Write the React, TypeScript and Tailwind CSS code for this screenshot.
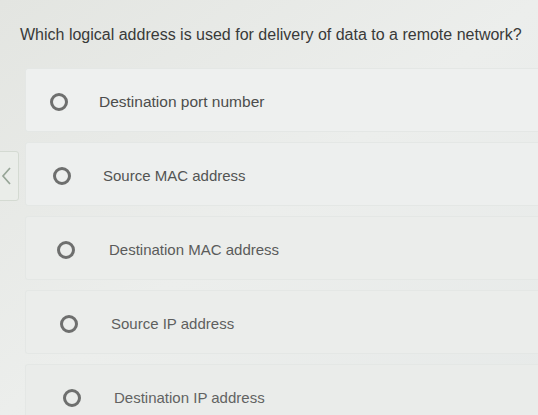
const options = [
  { label: "Destination port number", row: "pl-[24px] gap-[31px] bg-[#eef0ef]", text: "text-[15.5px] text-[#4c4d4c]" },
  { label: "Source MAC address", row: "pl-[27px] gap-[32px] bg-[#edefee]", text: "text-[15px] text-[#535453]" },
  { label: "Destination MAC address", row: "pl-[31px] gap-[34px] bg-[#ebedeb]", text: "text-[15px] text-[#5a5b5a]" },
  { label: "Source IP address", row: "pl-[34px] gap-[33px] bg-[#ebedeb]", text: "text-[15px] text-[#5e5f5e]" },
  { label: "Destination IP address", row: "pl-[37px] gap-[33px] bg-[#eaecea]", text: "text-[15px] text-[#626362]" },
];

function Radio() {
  return (
    <span className="block h-[18px] w-[18px] shrink-0 rounded-full border-[3px] border-[#6e6f6e]" />
  );
}

export default function App() {
  return (
    <div
      className="relative h-[415px] w-[538px] overflow-hidden bg-gradient-to-br from-[#e3e5e1] via-[#eceeec] to-[#e7eae9]"
      style={{ fontFamily: '"Liberation Sans", Arial, sans-serif' }}
    >
      <div className="pl-[20px] pt-[25px] text-[16px] leading-[20px] text-[#393a39]">
        Which logical address is used for delivery of data to a remote network?
      </div>

      {/* back arrow tab on the left edge */}
      <div className="absolute left-[-4px] top-[151px] flex h-[50px] w-[23px] items-center justify-center rounded-[3px] border border-[#d4dad2] bg-[#eaede9]">
        <svg width="11" height="20" viewBox="0 0 11 20" className="ml-[-2px]">
          <path d="M9 2 L2 10 L9 18" fill="none" stroke="#97a597" strokeWidth="1.7" />
        </svg>
      </div>

      <div className="mt-[23px] flex flex-col gap-[10px] pl-[25px]">
        {options.map((o) => (
          <div
            key={o.label}
            className={`flex h-[64px] items-center pt-[4px] rounded-l-[3px] border border-r-0 border-[#e4e7e5] ${o.row}`}
          >
            <Radio />
            <span className={o.text}>{o.label}</span>
          </div>
        ))}
      </div>
    </div>
  );
}
